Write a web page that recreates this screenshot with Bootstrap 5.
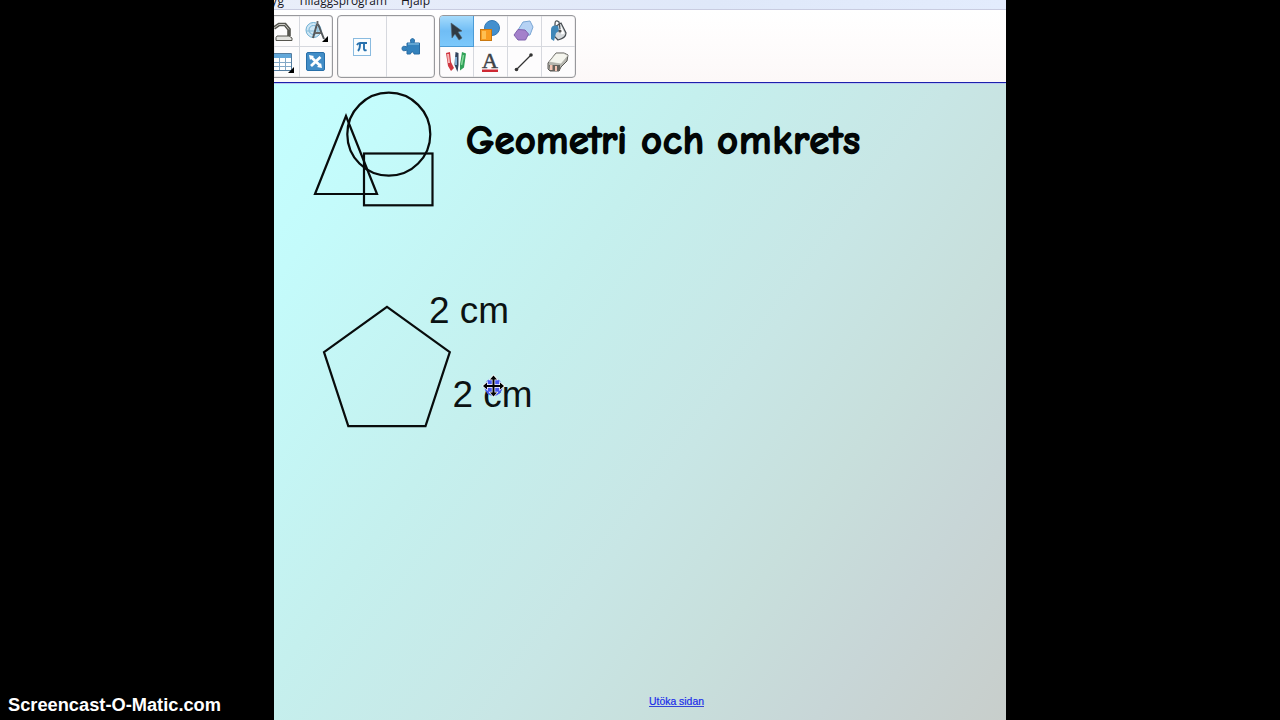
<!DOCTYPE html>
<html lang="sv">
<head>
<meta charset="utf-8">
<title>Geometri och omkrets</title>
<meta name="viewport" content="width=device-width, initial-scale=1">
<link href="https://cdn.jsdelivr.net/npm/bootstrap@5.3.0/dist/css/bootstrap.min.css" rel="stylesheet">
<style>
  body { background:#000; font-family:"Liberation Sans",Arial,sans-serif; }
  .stage { width:1280px; height:720px; }
  .side { width:274px; }
  .app-window { width:732px; background:#c7ecec; }
  .menu-strip { height:10px; background:linear-gradient(90deg,#e9eefa,#dfe8f9 60%,#e3ecfd); border-bottom:1px solid #c9cce0; }
  .menu-strip svg, .board svg { display:block; }
  .tool-strip { height:73px; padding-top:5px; background:linear-gradient(#fff,#fefcfc 45%,#fcf8f8); border-bottom:1px solid #1c20ac; }
  .tool-group { height:63px; border:1px solid #98989c; border-radius:4px; background:#fdfcfd; box-shadow:inset 0 0 0 .5px #ddd; }
  .tool-group.cut { width:59px; border-left:0; border-radius:0 4px 4px 0; }
  .tool-group.wide { width:98px; margin-left:4px; }
  .tool-group.main { width:137px; margin-left:4px; }
  .tool { display:flex; align-items:center; justify-content:center; min-width:0; border-right:1px solid #d6d8de; border-bottom:1px solid #d6d8de; }
  .tool.end { border-right:0; }
  .tool.low { border-bottom:0; }
  .tool.active { background:linear-gradient(#a5dbfc,#70bdf5 50%,#7cc8fb); border-color:#4b9bd6; border-radius:3px 0 0 0; }
  .cells { display:grid; height:100%; grid-template-rows:31px 30px; }
  .cut .cells { grid-template-columns:26px 32px; }
  .wide .cells { grid-template-columns:49px 47px; grid-template-rows:61px; }
  .main .cells { grid-template-columns:34px 34px 34px 33px; }
  .main svg { margin-right:1px; }
  .board { height:637px; border-top:1px solid #b9c9f0; background:linear-gradient(126deg,#c4ffff 0%,#c4fbfb 12%,#c5f0ee 36%,#c8e6e5 57%,#c8dfdc 71%,#c8d6d7 84%,#c8cecb 100%); }
  .watermark { font-size:18px; font-weight:700; color:#fff; line-height:20px; padding:0 0 5px 8px; white-space:nowrap; }
</style>
</head>
<body class="overflow-hidden">
<div class="stage d-flex">
  <aside class="side d-flex align-items-end flex-shrink-0">
    <div class="watermark"><svg class="d-block" width="220" height="20"><text x="0" y="16" textLength="213" lengthAdjust="spacingAndGlyphs" fill="#fff">Screencast-O-Matic.com</text></svg></div>
  </aside>
  <main class="app-window flex-shrink-0 overflow-hidden">
    <nav class="menu-strip overflow-hidden">
      <svg width="732" height="9" font-family="Open Sans,Noto Sans,sans-serif" font-size="12" fill="#15151d">
        <text x="-3" y="5" textLength="13">yg</text>
        <text x="24" y="5" textLength="89" lengthAdjust="spacingAndGlyphs">Tilläggsprogram</text>
        <text x="127" y="5" textLength="29" lengthAdjust="spacingAndGlyphs">Hjälp</text>
      </svg>
    </nav>
    <div class="tool-strip d-flex align-items-start">
      <div class="tool-group cut">
        <div class="cells">
          <div class="tool"><svg width="26" height="30" fill="none">
            <path d="M0 12 5 8.500h6l4 5V20" stroke="#55554f" stroke-width="3.600"/><path d="M0 12 5 8.500h6l4 5" stroke="#c9c9c4" stroke-width="1"/>
            <path d="M3 20h12l3 2v2.500H2v-3z" fill="#e2e2df" stroke="#55554f"/></svg></div>
          <div class="tool end"><svg width="32" height="30" fill="none">
            <circle cx="13.500" cy="14" r="7.500" fill="#cfe7f5" stroke="#6eaed2"/><circle cx="13.500" cy="14" r="4.500" stroke="#75b2d5"/><path d="M6 15h16" stroke="#87bddb"/>
            <path d="m17 8-4 14M18 8l6 15" stroke="#53585c" stroke-width="2"/><path d="M15 17h6M17.500 5v5" stroke="#666" stroke-width="1.800"/>
            <path d="M28 20v6h-6z" fill="#000"/></svg></div>
          <div class="tool low"><svg width="26" height="30" fill="none">
            <path d="M-2 6.500h19.500v17H-2z" fill="#fff" stroke="#547da0"/><path d="M-1 7h18v4H-1z" fill="#62a7d9"/><path d="M0 15.500h17M0 19.500h17M5.500 11v12M11.500 11v12" stroke="#83a8c6"/>
            <path d="M20 20v6h-6z" fill="#000"/></svg></div>
          <div class="tool end low"><svg width="32" height="30" fill="none">
            <rect x="6.500" y="5.500" width="18" height="18" rx="1.500" fill="#428dc7" stroke="#286fa9"/><path d="m11 10 9.500 9M20.500 10 11 19" stroke="#fff" stroke-width="2.800"/><path d="m9 8 5 1-4 4zM22 21l-5-1 4-4z" fill="#fff"/></svg></div>
        </div>
      </div>
      <div class="tool-group wide">
        <div class="cells">
          <div class="tool low"><svg width="20" height="20"><rect x="1.500" y="1.500" width="17" height="17" fill="#fafdff" stroke="#8abbe0"/><path d="M5 8q1-2 3-2h7M8 7q0 5-2 7M12 7v5q0 2 2.500 1" fill="none" stroke="#2771ae" stroke-width="1.900"/></svg></div>
          <div class="tool end low"><svg width="22" height="22"><path d="M7 7h4q-1.500-4 1.500-4.500Q15.500 3 14 7h5.500v11H14q0-2-1.700-2t-1.800 2H7v-4q-5 2-5-1.500T7 11z" fill="#3482bd" stroke="#286ca4"/><path d="M8 8h11" stroke="#70b0db" stroke-width="1.500"/></svg></div>
        </div>
      </div>
      <div class="tool-group main">
        <div class="cells">
          <div class="tool active"><svg width="32" height="30"><path d="m11 7 11 8-4 1 4 6-3 2-4-6-3 4z" fill="#303a43" stroke="#53616b" stroke-width=".6"/></svg></div>
          <div class="tool"><svg width="32" height="30"><circle cx="18" cy="12" r="7.500" fill="#438fce" stroke="#3479b4"/><rect x="6.500" y="13.500" width="11" height="11" fill="#f99c20" stroke="#c97810"/><path d="M8 15h4v8H8z" fill="#ffc052"/></svg></div>
          <div class="tool"><svg width="32" height="30"><path d="m15 6 7-1 3 6-3 8-8 1-4-6z" fill="#b6d2f4" stroke="#7aa6d4"/><path d="m10 13.500 7 .5 3.500 4-3 6H10L6 19z" fill="#a480cb" stroke="#8062ad"/></svg></div>
          <div class="tool end"><svg width="32" height="30"><path d="m11 12 8-5 5 10q0 5-8 7l-4-4z" fill="#d5d9dc" stroke="#454b50" stroke-width="1.200"/><path d="m18 11 3 7" stroke="#fff" stroke-width="3"/><path d="M13 13V8q0-5 4-2l1 7" fill="none" stroke="#4d5358" stroke-width="1.300"/><path d="M16 10q-7-2-7 4v9l3 2 2-8 3-2z" fill="#3f87b8"/><circle cx="18" cy="15" r="1.600" fill="#555"/></svg></div>
          <div class="tool low"><svg width="32" height="30"><path d="m6 6 4-1 1 10 3 6-3 3-3-5z" fill="#cf3741"/><path d="m8 7 1 9" stroke="#f8b4b5" stroke-width="2"/><path d="m15.500 5 3 1v12l-1 7-3-7z" fill="#32445f"/><path d="M16 10v8" stroke="#83aed4" stroke-width="2"/><path d="m22 5 4 1.500-2 14-4 3v-6z" fill="#30a158"/><path d="m23.500 8-2 10" stroke="#86d99b" stroke-width="1.500"/></svg></div>
          <div class="tool low"><svg width="32" height="30"><text x="16" y="21" text-anchor="middle" font-family="Liberation Serif,serif" font-size="22" fill="#3e4247" stroke="#3e4247" stroke-width=".5">A</text><path d="M8 22.500h16v2.500H8z" fill="#ce2933"/></svg></div>
          <div class="tool low"><svg width="32" height="30"><path d="m8 23 15-15" stroke="#333" stroke-width="1.300"/><circle cx="8.500" cy="22.500" r="1.800" fill="#333"/><circle cx="23" cy="8" r="1.800" fill="#333"/></svg></div>
          <div class="tool end low"><svg width="32" height="30" stroke="#5a5955"><path d="M14 6h8l4 2-1 6-6 6-2 4H8l-2-2v-6z" fill="#b5b5ae"/><path d="m7 15 7-8.500h8l4 2-7 8.500z" fill="#f5f5ee" stroke="#aaa9a2" stroke-width=".6"/><path d="M7 18h11v6H8z" fill="#64625d" stroke="none"/><path d="M8 18h2.500v5H8zM13 19h2v5h-2z" fill="#f5c4b2" stroke="none"/></svg></div>
        </div>
      </div>
    </div>
    <section class="board">
      <svg width="732" height="636" viewBox="274 84 732 636">
        <g fill="none" stroke="#080c0c" stroke-width="2.200">
          <path d="m346 116-31 78h62z"/>
          <circle cx="388.800" cy="134.200" r="41.500"/>
          <rect x="364" y="153.500" width="68.500" height="51.800"/>
          <path d="m387 306.800 62.800 45.400-24.300 73.900h-77.200L324 352.200z"/>
        </g>
        <g font-family="Comic Sans MS,Comic Neue,DejaVu Sans,sans-serif" font-size="38" fill="#020606" stroke="#020606" stroke-width="2.700" stroke-linejoin="round">
          <text x="466.500" y="152.500" textLength="160">Geometri</text>
          <text x="641.500" y="152.500" textLength="62">och</text>
          <text x="717.500" y="152.500" textLength="142">omkrets</text>
        </g>
        <g font-family="Liberation Sans,Arial,sans-serif" font-size="37.500" fill="#0b1212">
          <text x="429" y="323" textLength="80" lengthAdjust="spacingAndGlyphs">2 cm</text>
          <text x="452.500" y="407" textLength="80" lengthAdjust="spacingAndGlyphs">2 cm</text>
        </g>
        <circle cx="493.500" cy="387" r="9" fill="#4658ee"/>
        <path d="m493.500 375.500 3.500 4h-2.500v5.500h5.500v-2.500l4 3.500-4 3.500V387h-5.500v5.500h2.500l-3.500 4-3.500-4h2.500V387H487v2.500l-4-3.500 4-3.500v2.500h5.500v-5.500H490z" fill="#000" stroke="#fff" stroke-width="1.400" paint-order="stroke"/>
        <text x="649" y="704.500" textLength="55" lengthAdjust="spacingAndGlyphs" font-size="11" fill="#1a2bea" stroke="#1a2bea" stroke-width=".2">Utöka sidan</text>
        <path d="M649 706.500h55" stroke="#3444d9"/>
      </svg>
    </section>
  </main>
</div>
<script src="https://cdn.jsdelivr.net/npm/bootstrap@5.3.0/dist/js/bootstrap.bundle.min.js"></script>
</body>
</html>
